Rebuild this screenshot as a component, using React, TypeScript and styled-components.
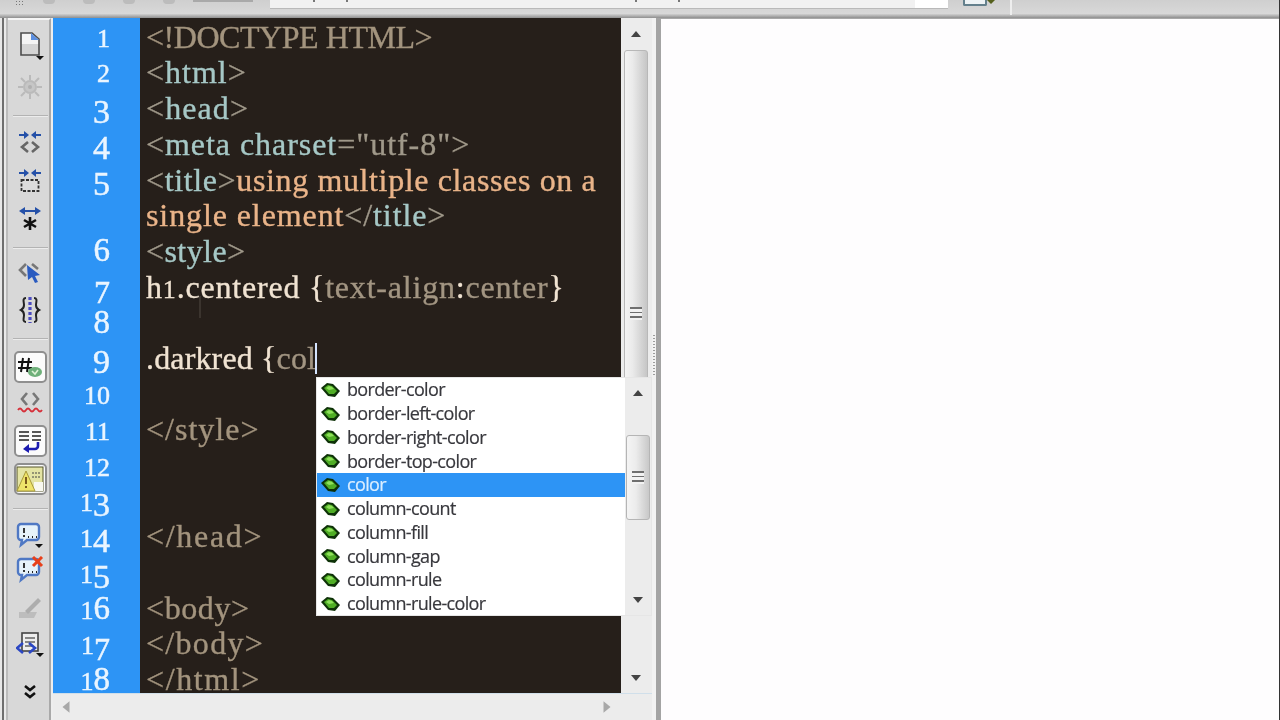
import React from "react";
import styled, { createGlobalStyle } from "styled-components";

const Global = createGlobalStyle`
  html, body { margin: 0; padding: 0; width: 1280px; height: 720px; overflow: hidden; background: #fff; }
  #root { width: 1280px; height: 720px; }
`;

const Page = styled.div`
  width: 1280px; height: 720px; overflow: hidden; display: flex; flex-direction: column;
  background: #d6d6d6; position: relative; border-right: 1px solid #333; box-sizing: border-box;
  filter: blur(0.45px);
`;

const TopBar = styled.div`
  height: 18px; flex: none; display: flex; align-items: flex-start;
  background: linear-gradient(#cfcfcf, #d8d8d8 75%, #8e8e8e 100%);
`;
const TopGrip = styled.div`
  width: 8px; margin-left: 15px; height: 5px; flex: none;
  background-image: radial-gradient(#777 40%, transparent 45%); background-size: 3px 3px;
`;
const GhostIcons = styled.div`
  display: flex; justify-content: space-between; margin-left: 20px; flex: none; width: 132px;
`;
const GhostDot = styled.div`
  width: 12px; height: 4px; background: #bcbcbc; border-radius: 0 0 5px 5px;
`;
const GhostLabel = styled.div`
  width: 60px; height: 2px; margin-left: 18px; flex: none; background: #a9a9a9;
`;
const AddressField = styled.div`
  width: 678px; height: 9px; margin-left: 17px; flex: none; display: flex; box-sizing: border-box;
  background: linear-gradient(90deg, #f1f1f1 645px, #fff 645px);
  border-bottom: 1px solid #b9b9b9; padding-left: 43px;
`;
const FieldTick = styled.div<{ $gap: number }>`
  width: 2px; height: 2px; flex: none; background: #777; margin-right: ${(p) => p.$gap}px;
`;
const ViewButton = styled.div`
  margin-left: 15px; width: 24px; height: 6px; background: #eef3f5; border: 2px solid #64808c; border-top: none;
  border-radius: 0 0 2px 2px; flex: none; box-sizing: border-box;
`;
const ViewCaret = styled.div`
  width: 0; height: 0; border: 4px solid transparent; border-top: 4px solid #55601d; flex: none;
`;
const TopDivider = styled.div`
  width: 2px; height: 15px; margin-left: 15px; background: #eeeeee; flex: none;
`;

const Workspace = styled.div`
  flex: 1; display: flex; min-height: 0; background: #eeeeee;
`;
const LeftEdge = styled.div`
  width: 8px; flex: none;
  background: linear-gradient(90deg, #e8e8e8 0, #e8e8e8 2px, #6f6f6f 2px, #6f6f6f 4px, #eaeaea 4px, #eaeaea 6px, #bcbcbc 6px);
`;
const Rail = styled.div`
  width: 43px; flex: none; display: flex; flex-direction: column; align-items: center;
  background: #d8d8d8; border-top: 2px solid #f5f5f5; border-right: 2px solid #a9a9a9; box-sizing: border-box;
  margin-right: 2px; padding: 12px 0 0 3px;
`;
const RailSlot = styled.div<{ $h: number; $mt?: number }>`
  height: ${(p) => p.$h}px; margin-top: ${(p) => p.$mt ?? 0}px; flex: none; width: 100%; display: flex;
  align-items: center; justify-content: center;
`;
const RailRule = styled.div<{ $mt: number }>`
  width: 35px; height: 1px; flex: none; margin-top: ${(p) => p.$mt}px; background: #b3b3b3; box-shadow: 0 1px 0 #ececec;
`;
const Toggle = styled.div`
  width: 33px; height: 32px; border: 2px solid #8f8f8f; border-radius: 5px; background: #fbfbfb; box-sizing: border-box;
  display: flex; align-items: center; justify-content: center; flex: none;
`;

const Main = styled.div`
  flex: 1; display: flex; min-width: 0; position: relative;
`;
const EditorColumn = styled.div`
  width: 599px; flex: none; display: flex; flex-direction: column;
`;
const EditorRow = styled.div`
  flex: none; height: 675px; display: flex;
`;
const Gutter = styled.div`
  width: 87px; flex: none; background: #2d94f5; display: flex; flex-direction: column; box-sizing: border-box;
  color: #eaf5ff; font: 29px/35.75px "Liberation Serif", serif; text-align: right; padding: 1.5px 30px 0 0;
  -webkit-text-stroke: 0.5px #eaf5ff;
`;
const GutterNum = styled.div<{ $extra?: number }>`
  height: 35.75px; flex: none; margin-bottom: ${(p) => p.$extra ?? 0}px;
`;
const Digit = styled.span<{ $size: number; $drop: number }>`
  font-size: ${(p) => p.$size}px; line-height: 0; position: relative; top: ${(p) => p.$drop}px;
`;
const Code = styled.div`
  width: 481px; flex: none; background: #261f1a; padding: 1.8px 0 0 6px; box-sizing: border-box; overflow: hidden;
  font: 32px/35.7px "Liberation Serif", serif; color: #f0e3d2; white-space: pre;
  -webkit-text-stroke: 0.35px;
`;
const CodeLine = styled.div<{ $ls?: number }>`
  height: 35.7px; letter-spacing: ${(p) => p.$ls ?? 0.6}px;
`;
const Tag = styled.span`
  color: #a6c8c6;
`;
const Punct = styled.span`
  color: #a0998a;
`;
const Doc = styled.span`
  color: #a3947e;
`;
const Title = styled.span`
  color: #eab489;
`;
const Dim = styled.span`
  color: #a29582;
`;
const OldOne = styled.span`
  font-size: 26px;
`;
const Caret = styled.span`
  display: inline-block; width: 2px; height: 31px; background: #d5e4ff; vertical-align: -5px; margin-left: -1px;
`;
const IBeam = styled.div`
  position: absolute; left: 146px; top: 278px; width: 2px; height: 22px; background: #3b342e;
`;
const VScroll = styled.div`
  width: 31px; flex: none; background: #ececec; display: flex; flex-direction: column; align-items: flex-start;
  box-sizing: border-box; overflow: hidden;
`;
const ArrowBox = styled.div<{ $h: number }>`
  height: ${(p) => p.$h}px; flex: none; display: flex; align-items: center; justify-content: center; width: 100%;
`;
const VArrowBox = styled(ArrowBox)`
  width: 31px; padding-right: 2px; box-sizing: border-box;
`;
const Thumb = styled.div`
  width: 24px; height: 526px; flex: none; margin-left: 3px; border: 1px solid #b8b8b8; border-radius: 3px; box-sizing: border-box;
  background: linear-gradient(90deg, #f4f4f4, #eaeaea 35%, #c6c6c6); display: flex; align-items: center; justify-content: center;
`;
const Grip = styled.div`
  width: 12px; height: 13px; flex: none;
  background: repeating-linear-gradient(#6f6f6f 0, #6f6f6f 1.5px, #f2f2f2 1.5px, #f2f2f2 4.5px);
`;
const Track = styled.div`
  flex: 1;
`;
const SplitHandle = styled.div`
  width: 4px; flex: none; background: #f2f2f2; border-right: 5px solid #a4a4a4; position: relative;
`;
const SplitDots = styled.div`
  position: absolute; left: 1px; top: 317px; width: 2px; height: 42px;
  background: repeating-linear-gradient(#9c9c9c 0, #9c9c9c 1px, #f2f2f2 1px, #f2f2f2 3px);
`;
const BottomRow = styled.div`
  flex: 1; display: flex; align-items: center; justify-content: space-between; background: #ececec; box-sizing: border-box;
  border-top: 1px solid #d0dfea; padding: 0 38px 0 6px;
`;
const Preview = styled.div`
  flex: 1; background: #fefdfe; border-top: 1px solid #a8a8a8;
`;

const Popup = styled.div`
  position: absolute; left: 316px; top: 377px; width: 336px; height: 239px; display: flex;
  background: #fff; border: 1px solid #e6e6e6; box-sizing: border-box;
`;
const PopupList = styled.div`
  width: 308px; flex: none; display: flex; flex-direction: column;
`;
const PopupItem = styled.div<{ $sel?: boolean }>`
  height: 23.75px; flex: none; display: flex; align-items: center; padding-left: 4px; gap: 6px;
  font: 18px/23px "Open Sans", "Liberation Sans", sans-serif; letter-spacing: -0.65px;
  color: ${(p) => (p.$sel ? "#dbeeff" : "#38383d")}; background: ${(p) => (p.$sel ? "#2d94f5" : "transparent")};
  -webkit-text-stroke: 0.2px;
`;
const PopupScroll = styled.div`
  flex: 1; background: #ececec; display: flex; flex-direction: column; align-items: center;
`;
const PopupThumb = styled.div`
  width: 24px; height: 85px; flex: none; margin-top: 27px; border: 1px solid #b5b5b5; border-radius: 3px; box-sizing: border-box;
  background: linear-gradient(90deg, #f4f4f4, #ececec 40%, #c8c8c8); display: flex; align-items: center; justify-content: center;
`;

const Tri = ({ dir, color = "#444", s = 12 }: { dir: "u" | "d" | "l" | "r"; color?: string; s?: number }) => {
  const pts = { u: "1,9 11,9 6,3", d: "1,3 11,3 6,9", l: "9,1 9,11 3,6", r: "3,1 3,11 9,6" }[dir];
  return (
    <svg width={s} height={s} viewBox="0 0 12 12"><polygon points={pts} fill={color} /></svg>
  );
};

const Gem = () => (
  <svg width="20" height="14" viewBox="0 0 20 14" style={{ flex: "none" }}>
    <polygon points="0,5 6,0 12,1 19,8 14,14 7,13" fill="#0e3208" />
    <polygon points="3,5 7,2 11,3 16,8 13,11 8,11" fill="#4fae25" />
    <polygon points="5,5 8,3 11,4 13,6 8,7" fill="#8ee05a" />
  </svg>
);

const IconNew = () => (
  <svg width="30" height="30" viewBox="0 0 30 30">
    <path d="M6 2h11l7 6v16H6z" fill="#f4f4f4" />
    <path d="M6 13h18v11H6z" fill="#d4d4d4" />
    <path d="M6 2h11l7 6v16H6z" fill="none" stroke="#4c4c4c" strokeWidth="1.6" />
    <path d="M16 2l8 7h-8z" fill="#5b8fe0" />
    <polygon points="21,25 29,25 25,29" fill="#111" />
  </svg>
);
const IconGear = () => (
  <svg width="26" height="26" viewBox="0 0 26 26" stroke="#bababa" strokeWidth="2" fill="none">
    <circle cx="13" cy="13" r="6" fill="#c6c6c6" />
    <circle cx="13" cy="13" r="2" fill="#b0b0b0" stroke="none" />
    <path d="M13 1v5M13 20v5M1 13h5M20 13h5M4 4l4 4M18 18l4 4M22 4l-4 4M8 18l-4 4" />
  </svg>
);
const Arrows = ({ apart }: { apart?: boolean }) =>
  apart ? (
    <path d="M12 5H7V2L1 6l6 4V7h5zM12 5h5V2l6 4-6 4V7h-5z" fill="#2450a8" />
  ) : (
    <path d="M1 5h5V2l5 4-5 4V7H1zM23 5h-5V2l-5 4 5 4V7h5z" fill="#2450a8" />
  );
const IconCollapse1 = () => (
  <svg width="24" height="26" viewBox="0 0 24 26">
    <Arrows />
    <path d="M10 13l-6 5 6 5M14 13l6 5-6 5" fill="none" stroke="#666" strokeWidth="2.6" />
  </svg>
);
const IconCollapse2 = () => (
  <svg width="24" height="26" viewBox="0 0 24 26">
    <Arrows />
    <rect x="3.5" y="13" width="17" height="11" fill="#dcdcdc" stroke="#333" strokeWidth="1.8" strokeDasharray="3 1.5" />
  </svg>
);
const IconExpand = () => (
  <svg width="24" height="26" viewBox="0 0 24 26">
    <Arrows apart />
    <path d="M12 12v13M6 15l12 7M18 15L6 22" stroke="#111" strokeWidth="2.6" />
  </svg>
);
const IconSelect = () => (
  <svg width="24" height="24" viewBox="0 0 24 24">
    <path d="M8 3L2 9l6 6M14 3l6 5" fill="none" stroke="#777" strokeWidth="2.6" />
    <path d="M9 4l13 10-5 1 3 6-3 1-3-6-4 3z" fill="#2a5bc0" />
  </svg>
);
const IconBrace = () => (
  <svg width="24" height="28" viewBox="0 0 24 28">
    <path d="M8 2C4 2 6 6 6 9s-1 4-3 5c2 1 3 2 3 5s-2 7 2 7M16 2c4 0 2 4 2 7s1 4 3 5c-2 1-3 2-3 5s2 7-2 7" fill="none" stroke="#222" strokeWidth="2" />
    <path d="M12 1v26" stroke="#4a4ac0" strokeWidth="3.2" strokeDasharray="3 2" />
  </svg>
);
const IconHash = () => (
  <svg width="26" height="24" viewBox="0 0 26 24">
    <path d="M6 3L4 17M12 3l-2 14M1 7h14M1 13h14" stroke="#111" strokeWidth="2" />
    <ellipse cx="18" cy="17" rx="7" ry="5" fill="#6eb07a" />
    <path d="M15 16l3 3 3-4" stroke="#dff3d7" strokeWidth="1.6" fill="none" />
  </svg>
);
const IconSyntax = () => (
  <svg width="26" height="24" viewBox="0 0 26 24">
    <path d="M10 2L5 8l5 6M16 2l5 6-5 6" fill="none" stroke="#777" strokeWidth="2.6" />
    <path d="M1 19q2-3 4 0t4 0 4 0 4 0 4 0 4 0" fill="none" stroke="#d6303a" strokeWidth="1.8" />
  </svg>
);
const IconWrap = () => (
  <svg width="24" height="24" viewBox="0 0 24 24">
    <path d="M1 3h10M1 7h10M1 11h10M14 3h9M14 7h9M14 11h9" stroke="#222" strokeWidth="1.6" />
    <path d="M20 13v4a3 3 0 0 1-3 3H9" fill="none" stroke="#1a1ab0" strokeWidth="2.6" />
    <path d="M11 15l-6 5 6 4z" fill="#1a1ab0" />
  </svg>
);
const IconInfo = () => (
  <svg width="28" height="26" viewBox="0 0 28 26">
    <rect x="1" y="1" width="26" height="24" fill="#e4e4a4" stroke="#55552b" strokeWidth="1" />
    <rect x="18" y="16" width="9" height="9" fill="#f8f8f0" />
    <path d="M10 5L1 25h18z" fill="#eee36a" stroke="#a89a3a" />
    <rect x="9" y="11" width="2" height="7" fill="#7b5a1c" />
    <rect x="9" y="20" width="2" height="2" fill="#7b5a1c" />
    <path d="M16 7h9M16 11h9" stroke="#444" strokeDasharray="2 1" />
  </svg>
);
const Bubble = ({ bad }: { bad?: boolean }) => (
  <svg width="28" height="28" viewBox="0 0 28 28">
    <path d="M5 3h15a3 3 0 0 1 3 3v10a3 3 0 0 1-3 3H11l-6 5 1-5H5a3 3 0 0 1-3-3V6a3 3 0 0 1 3-3z" fill="#e6f2fa" stroke="#4f78c4" strokeWidth="2.4" />
    <path d="M8 7v5M8 14v2M12 16h1M16 16h1M20 16h1" stroke="#222" strokeWidth="1.8" />
    {bad ? <path d="M17 1l9 9M26 1l-9 9" stroke="#e8401a" strokeWidth="3" /> : <polygon points="19,23 27,23 23,27" fill="#111" />}
  </svg>
);
const IconPen = () => (
  <svg width="26" height="24" viewBox="0 0 26 24">
    <path d="M2 16h18l-3 6H2z" fill="#bdbdbd" />
    <path d="M8 15L21 2l3 3L11 18z" fill="#adadad" />
  </svg>
);
const IconSource = () => (
  <svg width="28" height="26" viewBox="0 0 28 26">
    <rect x="6" y="1" width="16" height="18" fill="#eee" stroke="#444" strokeWidth="1.6" />
    <path d="M9 6h10M9 10h10M9 14h8" stroke="#666" strokeWidth="1.4" />
    <path d="M7 11l-6 5 6 5M13 11l6 5-6 5" fill="none" stroke="#2b47c4" strokeWidth="2.6" />
    <polygon points="20,21 28,21 24,25" fill="#111" />
  </svg>
);
const IconChevrons = () => (
  <svg width="14" height="16" viewBox="0 0 14 16">
    <path d="M2 1l5 4 5-4M2 8l5 4 5-4" fill="none" stroke="#111" strokeWidth="2.6" />
  </svg>
);

const digitStyle = (d: string): [number, number] => {
  if ("012".includes(d)) return [26, 0];
  if ("3459".includes(d)) return [34, 5];
  if (d === "7") return [32, 6];
  return [33, 0];
};
const Numeral = ({ n }: { n: string }) => (
  <>
    {n.split("").map((d, i) => {
      const [size, drop] = digitStyle(d);
      return <Digit key={i} $size={size} $drop={drop}>{d}</Digit>;
    })}
  </>
);

const numbers = ["1", "2", "3", "4", "5", "6", "7", "8", "9", "10", "11", "12", "13", "14", "15", "16", "17", "18"];
const items = ["border-color", "border-left-color", "border-right-color", "border-top-color", "color", "column-count", "column-fill", "column-gap", "column-rule", "column-rule-color"];

export default function App() {
  return (
    <Page>
      <Global />
      <TopBar>
        <TopGrip />
        <GhostIcons><GhostDot /><GhostDot /><GhostDot /><GhostDot /></GhostIcons>
        <GhostLabel />
        <AddressField>
          <FieldTick $gap={31} /><FieldTick $gap={287} /><FieldTick $gap={41} /><FieldTick $gap={0} />
        </AddressField>
        <ViewButton />
        <ViewCaret />
        <TopDivider />
      </TopBar>
      <Workspace>
        <LeftEdge />
        <Rail>
          <RailSlot $h={28}><IconNew /></RailSlot>
          <RailSlot $h={28} $mt={13}><IconGear /></RailSlot>
          <RailRule $mt={14} />
          <RailSlot $h={28} $mt={12}><IconCollapse1 /></RailSlot>
          <RailSlot $h={28} $mt={10}><IconCollapse2 /></RailSlot>
          <RailSlot $h={28} $mt={10}><IconExpand /></RailSlot>
          <RailRule $mt={15} />
          <RailSlot $h={28} $mt={11}><IconSelect /></RailSlot>
          <RailSlot $h={34} $mt={6}><IconBrace /></RailSlot>
          <RailRule $mt={11} />
          <RailSlot $h={32} $mt={12}><Toggle><IconHash /></Toggle></RailSlot>
          <RailSlot $h={28} $mt={6}><IconSyntax /></RailSlot>
          <RailSlot $h={32} $mt={8}><Toggle><IconWrap /></Toggle></RailSlot>
          <RailSlot $h={32} $mt={6}><Toggle><IconInfo /></Toggle></RailSlot>
          <RailRule $mt={13} />
          <RailSlot $h={28} $mt={12}><Bubble /></RailSlot>
          <RailSlot $h={28} $mt={7}><Bubble bad /></RailSlot>
          <RailSlot $h={28} $mt={10}><IconPen /></RailSlot>
          <RailSlot $h={28} $mt={9}><IconSource /></RailSlot>
          <RailSlot $h={20} $mt={24}><IconChevrons /></RailSlot>
        </Rail>
        <Main>
          <EditorColumn>
            <EditorRow>
              <Gutter>
                {numbers.map((n) => (
                  <GutterNum key={n} $extra={n === "5" ? 35.75 : 0}><Numeral n={n} /></GutterNum>
                ))}
              </Gutter>
              <Code>
                <CodeLine $ls={-0.45}><Doc>&lt;!DOCTYPE HTML&gt;</Doc></CodeLine>
                <CodeLine $ls={1}><Punct>&lt;</Punct><Tag>html</Tag><Punct>&gt;</Punct></CodeLine>
                <CodeLine $ls={1.1}><Punct>&lt;</Punct><Tag>head</Tag><Punct>&gt;</Punct></CodeLine>
                <CodeLine $ls={0.95}><Punct>&lt;</Punct><Tag>meta charset</Tag><Punct>="utf-8"&gt;</Punct></CodeLine>
                <CodeLine $ls={0.63}><Punct>&lt;</Punct><Tag>title</Tag><Punct>&gt;</Punct><Title>using multiple classes on a</Title></CodeLine>
                <CodeLine $ls={0.9}><Title>single element</Title><Punct>&lt;/</Punct><Tag>title</Tag><Punct>&gt;</Punct></CodeLine>
                <CodeLine $ls={0.43}><Punct>&lt;</Punct><Tag>style</Tag><Punct>&gt;</Punct></CodeLine>
                <CodeLine $ls={0.8}>h<OldOne>1</OldOne>.centered {"{"}<Dim>text-align</Dim>:<Dim>center</Dim>{"}"}</CodeLine>
                <CodeLine> </CodeLine>
                <CodeLine $ls={0.15}>.darkred {"{"}<Dim>col</Dim><Caret /></CodeLine>
                <CodeLine> </CodeLine>
                <CodeLine $ls={1}><Doc>&lt;/style&gt;</Doc></CodeLine>
                <CodeLine> </CodeLine>
                <CodeLine> </CodeLine>
                <CodeLine $ls={1.7}><Doc>&lt;/head&gt;</Doc></CodeLine>
                <CodeLine> </CodeLine>
                <CodeLine $ls={0.6}><Doc>&lt;body&gt;</Doc></CodeLine>
                <CodeLine $ls={1.3}><Doc>&lt;/body&gt;</Doc></CodeLine>
                <CodeLine $ls={1.6}><Doc>&lt;/html&gt;</Doc></CodeLine>
              </Code>
              <VScroll>
                <VArrowBox $h={32}><Tri dir="u" /></VArrowBox>
                <Thumb><Grip /></Thumb>
                <Track />
                <VArrowBox $h={30}><Tri dir="d" /></VArrowBox>
              </VScroll>
            </EditorRow>
            <BottomRow>
              <Tri dir="l" color="#a8a8a8" s={14} />
              <Tri dir="r" color="#a8a8a8" s={14} />
            </BottomRow>
          </EditorColumn>
          <SplitHandle><SplitDots /></SplitHandle>
          <Preview />
          <IBeam />
        </Main>
      </Workspace>
      <Popup>
        <PopupList>
          {items.map((t) => (
            <PopupItem key={t} $sel={t === "color"}><Gem />{t}</PopupItem>
          ))}
        </PopupList>
        <PopupScroll>
          <ArrowBox $h={30}><Tri dir="u" /></ArrowBox>
          <PopupThumb><Grip /></PopupThumb>
          <Track />
          <ArrowBox $h={30}><Tri dir="d" /></ArrowBox>
        </PopupScroll>
      </Popup>
    </Page>
  );
}
